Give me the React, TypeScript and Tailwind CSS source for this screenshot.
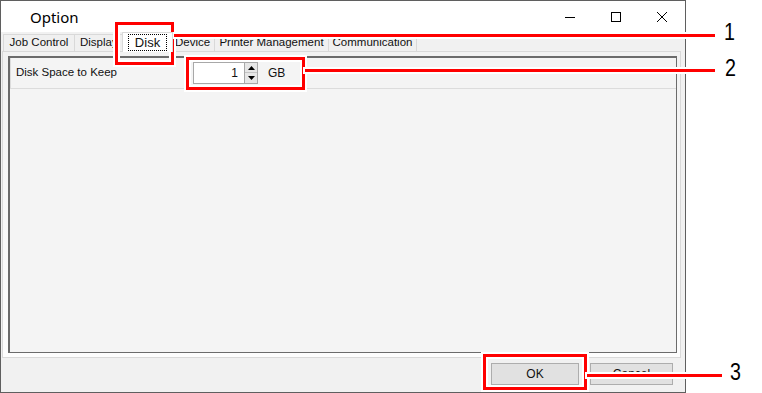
import React from 'react';

interface TabProps {
  label: string;
  className: string;
  active?: boolean;
}

const Tab: React.FC<TabProps> = ({ label, className, active }) =>
  active ? (
    <div className={`relative z-10 -mb-px flex h-[20px] items-start justify-center border-x border-t border-[#d9d9d9] bg-white pt-px ${className}`}>
      <span className="flex h-[17px] w-[39px] items-center justify-center border border-dotted border-black text-[13px]">{label}</span>
    </div>
  ) : (
    <div className={`flex h-[17px] items-center justify-center overflow-hidden whitespace-nowrap border-l border-t border-[#d9d9d9] bg-[#f0f0f0] ${className}`}>
      {label}
    </div>
  );

const Box: React.FC<{ className: string }> = ({ className }) => (
  <div className={`absolute border-[3px] border-[#ff0000] shadow-[0_0_0_2px_#fff,inset_0_0_0_2px_#fff] ${className}`} />
);

const Line: React.FC<{ className: string }> = ({ className }) => (
  <div className={`absolute h-[3px] bg-[#ff0000] shadow-[0_0_0_2px_#fff] ${className}`} />
);

const Num: React.FC<{ n: string; className: string }> = ({ n, className }) => (
  <div className={`absolute origin-left scale-x-[0.82] font-['Liberation_Sans',sans-serif] text-[24px] leading-[24px] text-black ${className}`}>
    {n}
  </div>
);

export default function App() {
  return (
    <div className="relative h-[393px] w-[762px] overflow-hidden bg-white font-['Liberation_Sans',Arial,sans-serif] text-[11.5px] text-[#111]">
      <div className="flex h-[393px] w-[686px] flex-col border border-[#5f5f5f] bg-[#f1f1f1]">
        {/* title bar */}
        <div className="flex h-[31px] items-center bg-white">
          <span className="pl-[29px] pt-[2px] font-['Noto_Sans',sans-serif] text-[15px] text-black">Option</span>
          <div className="ml-auto flex h-full">
            <div className="flex w-[46px] items-center justify-center">
              <svg width="10" height="10" viewBox="0 0 10 10">
                <path d="M0 5.5h10" stroke="#000" strokeWidth="1" />
              </svg>
            </div>
            <div className="flex w-[46px] items-center justify-center">
              <svg width="10" height="10" viewBox="0 0 10 10">
                <rect x="0.5" y="0.5" width="9" height="9" fill="none" stroke="#000" strokeWidth="1" />
              </svg>
            </div>
            <div className="flex w-[46px] items-center justify-center">
              <svg width="10" height="10" viewBox="0 0 10 10">
                <path d="M0 0L10 10M10 0L0 10" stroke="#000" strokeWidth="1" />
              </svg>
            </div>
          </div>
        </div>

        {/* tabs */}
        <div className="flex h-[19px] items-end pl-[2px]">
          <Tab label="Job Control" className="w-[71px]" />
          <Tab label="Display" className="w-[48px] justify-start pl-[5px]" />
          <Tab label="Disk" className="w-[51px]" active />
          <Tab label="Device" className="w-[41px] justify-start pl-px" />
          <Tab label="Printer Management" className="w-[114px]" />
          <Tab label="Communication" className="w-[89px] border-r" />
        </div>

        {/* tab page */}
        <div className="ml-px mr-[4px] flex h-[307px] flex-col border border-[#d9d9d9] bg-linear-to-b from-[#f2f2f2] to-[#fdfdfd] pb-[4px] pl-[5px] pr-[3px] pt-[4px]">
          <div className="flex flex-1 flex-col border-b border-l-2 border-r border-t-2 border-[#6b6b6b] bg-[#f4f4f4]">
            <div className="flex h-[31px] items-center border-b border-l border-[#dcdcdc]">
              <div className="w-[182px] pl-[5px]">Disk Space to Keep</div>
              <div className="flex h-[22px]">
                <div className="flex w-[52px] items-center justify-end border border-[#a8a8a8] bg-white pr-[6px] text-[12px]">1</div>
                <div className="flex w-[13px] flex-col border-y border-r border-[#a8a8a8]">
                  <div className="flex h-[10px] items-center justify-center border-b border-[#c4c4c4] bg-[#e6e6e6]">
                    <svg width="7" height="4" viewBox="0 0 7 4">
                      <path d="M3.5 0L7 4H0Z" fill="#000" />
                    </svg>
                  </div>
                  <div className="flex flex-1 items-center justify-center bg-[#e6e6e6]">
                    <svg width="7" height="4" viewBox="0 0 7 4">
                      <path d="M0 0H7L3.5 4Z" fill="#000" />
                    </svg>
                  </div>
                </div>
              </div>
              <span className="ml-[10px] text-[12px]">GB</span>
            </div>
          </div>
        </div>

        {/* buttons */}
        <div className="flex flex-1 items-start justify-end gap-[11px] pr-[12px] pt-[5px]">
          <button className="h-[22px] w-[88px] border border-[#adadad] bg-[#e1e1e1] text-[12px]">OK</button>
          <button className="h-[22px] w-[83px] border border-[#adadad] bg-[#e1e1e1] text-[12px]">Cancel</button>
        </div>
      </div>

      {/* annotations */}
      <Box className="left-[115px] top-[22px] h-[43px] w-[59px]" />
      <Line className="left-[174px] top-[34px] w-[541px]" />
      <Num n="1" className="left-[724px] top-[20px]" />

      <Box className="left-[186px] top-[57px] h-[33px] w-[119px]" />
      <Line className="left-[305px] top-[69px] w-[410px]" />
      <Num n="2" className="left-[725px] top-[56px]" />

      <Box className="left-[483px] top-[354px] h-[36px] w-[104px]" />
      <Line className="left-[587px] top-[374px] w-[135px]" />
      <Num n="3" className="left-[730px] top-[360px]" />
    </div>
  );
}
